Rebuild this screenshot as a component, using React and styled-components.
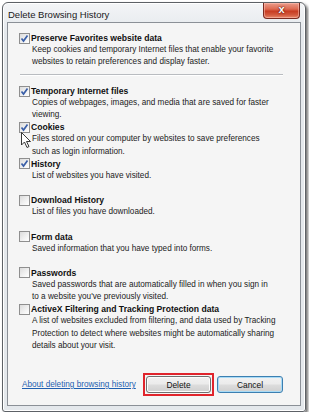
import React from "react";
import styled, { createGlobalStyle } from "styled-components";

const Global = createGlobalStyle`
  html, body { margin: 0; padding: 0; background: #ffffff; }
  body { font-family: "Liberation Sans", Arial, sans-serif; }
  * { box-sizing: border-box; }
`;

const Window = styled.div`
  position: relative;
  margin: 2px 0 0 2px;
  width: 304px;
  height: 410px;
  border: 1px solid #5d6166;
  border-radius: 6px 6px 3px 3px;
  background: linear-gradient(180deg, #f3f5f7 0px, #e4e8ec 30px, #e4e8ec 100%);
  box-shadow: 2px 2px 3px rgba(0, 0, 0, 0.55), inset 0 0 0 1px #ffffff;
  display: flex;
  flex-direction: column;
`;

const TitleBar = styled.div`
  height: 19px;
  display: flex;
  align-items: center;
  justify-content: space-between;
  padding-left: 5px;
`;

const Title = styled.div`
  font-size: 9.5px;
  color: #1a1a1a;
  padding-top: 3px;
`;

const CloseButton = styled.div`
  align-self: flex-start;
  margin-right: 5px;
  width: 37px;
  height: 16px;
  border: 1px solid #7a2a20;
  border-top: none;
  border-radius: 0 0 4px 4px;
  background: linear-gradient(180deg, #eb9d8c 0%, #dd6a52 40%, #c83c22 55%, #d35a3e 80%, #e98a6c 100%);
  box-shadow: inset 0 0 0 1px rgba(255, 200, 190, 0.5);
  display: flex;
  align-items: center;
  justify-content: center;
  color: #ffffff;
  font-size: 11px;
  font-weight: bold;
  line-height: 1;
  padding-bottom: 2px;
  text-shadow: 0 0 1px #5a1008, 0 0 2px #5a1008;
`;

const Panel = styled.div`
  flex: 1;
  margin: 0 4px 5px 4px;
  border: 1px solid #8b9097;
  background: #f5f5f5;
  position: relative;
  display: flex;
  flex-direction: column;
  padding: 9px 0 0 11px;
`;

const Item = styled.div`
  display: grid;
  grid-template-columns: 12px 1fr;
  min-height: ${(p) => p.$h || 36.4}px;
  align-content: start;
`;

const Box = styled.div`
  width: 11px;
  height: 11px;
  margin-top: 0.5px;
  border: 1px solid #8f8f8f;
  background: linear-gradient(135deg, #dcdcdc 0%, #f6f6f6 70%, #ffffff 100%);
  display: flex;
  align-items: center;
  justify-content: center;
`;

const Label = styled.div`
  font-size: 8.6px;
  font-weight: bold;
  color: #101010;
  line-height: 12px;
`;

const Desc = styled.div`
  grid-column: 2;
  font-size: 8.2px;
  color: #222;
  line-height: 12.2px;
  padding-left: 1px;
`;

const Separator = styled.div`
  height: 1px;
  margin: 0 17px 10px 1px;
  background: #b9bcc0;
  box-shadow: 0 1px 0 #ffffff;
`;

const Footer = styled.div`
  margin-top: auto;
  display: flex;
  align-items: center;
  padding: 0 17px 9px 3px;
`;

const Link = styled.a`
  font-size: 8.2px;
  color: #1f5fb0;
  text-decoration: underline;
  margin-right: auto;
`;

const Highlight = styled.div`
  border: 2px solid #e0242c;
  padding: 1px;
  margin-right: 3px;
`;

const Button = styled.div`
  width: ${(p) => p.$w}px;
  height: 17px;
  border: 1px solid ${(p) => (p.$default ? "#3c7fb1" : "#707070")};
  border-radius: 3px;
  background: linear-gradient(180deg, #f2f2f2 0%, #ebebeb 48%, #dddddd 52%, #cfcfcf 100%);
  box-shadow: ${(p) => (p.$default ? "inset 0 0 0 1px #a9dbf6" : "inset 0 0 0 1px #fcfcfc")};
  font-size: 8.4px;
  color: #111;
  display: flex;
  align-items: center;
  justify-content: center;
`;

const Cursor = styled.svg`
  position: absolute;
  left: 13px;
  top: 109px;
`;

function Check({ on }) {
  return (
    <Box>
      {on && (
        <svg width="9" height="9" viewBox="0 0 9 9">
          <path d="M1.5 4.5 L3.5 7 L7.5 1.5" stroke="#3a5fa8" strokeWidth="1.7" fill="none" />
        </svg>
      )}
    </Box>
  );
}

const items = [
  { label: "Temporary Internet files", on: true, desc: ["Copies of webpages, images, and media that are saved for faster", "viewing."] },
  { label: "Cookies", on: true, desc: ["Files stored on your computer by websites to save preferences", "such as login information."] },
  { label: "History", on: true, desc: ["List of websites you have visited."] },
  { label: "Download History", on: false, desc: ["List of files you have downloaded."] },
  { label: "Form data", on: false, desc: ["Saved information that you have typed into forms."] },
  { label: "Passwords", on: false, desc: ["Saved passwords that are automatically filled in when you sign in", "to a website you've previously visited."] },
  { label: "ActiveX Filtering and Tracking Protection data", on: false, desc: ["A list of websites excluded from filtering, and data used by Tracking", "Protection to detect where websites might be automatically sharing", "details about your visit."] },
];

export default function App() {
  return (
    <>
      <Global />
      <Window>
        <TitleBar>
          <Title>Delete Browsing History</Title>
          <CloseButton>x</CloseButton>
        </TitleBar>
        <Panel>
          <Item $h={42}>
            <Check on />
            <Label>Preserve Favorites website data</Label>
            <Desc>
              Keep cookies and temporary Internet files that enable your favorite
              <br />
              websites to retain preferences and display faster.
            </Desc>
          </Item>
          <Separator />
          {items.map((it) => (
            <Item key={it.label}>
              <Check on={it.on} />
              <Label>{it.label}</Label>
              <Desc>
                {it.desc.map((d, i) => (
                  <React.Fragment key={i}>
                    {i > 0 && <br />}
                    {d}
                  </React.Fragment>
                ))}
              </Desc>
            </Item>
          ))}
          <Footer>
            <Link href="#">About deleting browsing history</Link>
            <Highlight>
              <Button $w={65}>Delete</Button>
            </Highlight>
            <Button $w={66} $default>Cancel</Button>
          </Footer>
          <Cursor width="10" height="17" viewBox="0 0 10 17">
            <path d="M0.5 0.5 L0.5 13 L3.5 10 L6 15.5 L8 14.5 L5.5 9.5 L9.5 9.5 Z" fill="#ffffff" stroke="#222" strokeWidth="0.9" />
          </Cursor>
        </Panel>
      </Window>
    </>
  );
}
